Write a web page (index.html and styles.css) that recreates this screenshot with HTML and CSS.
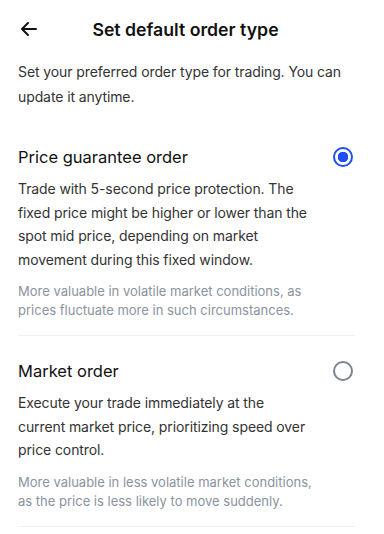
FILE: index.html
```html
<!DOCTYPE html>
<html>
<head>
<meta charset="utf-8">
<link rel="stylesheet" href="styles.css">
</head>
<body>
<div class="page">
  <header class="header">
    <svg class="back" width="20" height="20" viewBox="0 0 20 20"><path d="M17 10H3M9 4L3 10L9 16" fill="none" stroke="#111" stroke-width="2" stroke-linecap="round" stroke-linejoin="round"/></svg>
    <h1 class="title">Set default order type</h1>
  </header>
  <p class="intro">Set your preferred order type for trading. You can update it anytime.</p>
  <div class="option">
    <div class="option-head">
      <span class="option-title">Price guarantee order</span>
      <span class="radio checked"></span>
    </div>
    <p class="desc">Trade with 5-second price protection. The fixed price might be higher or lower than the spot mid price, depending on market movement during this fixed window.</p>
    <p class="note">More valuable in volatile market conditions, as prices fluctuate more in such circumstances.</p>
  </div>
  <div class="option">
    <div class="option-head">
      <span class="option-title">Market order</span>
      <span class="radio"></span>
    </div>
    <p class="desc">Execute your trade immediately at the current market price, prioritizing speed over price control.</p>
    <p class="note">More valuable in less volatile market conditions, as the price is less likely to move suddenly.</p>
  </div>
</div>
</body>
</html>
```
FILE: styles.css
```css
* { box-sizing: border-box; }
body { margin: 0; background: #fff; font-family: Inter, "Noto Sans", sans-serif; color: #111; }
.page { padding: 0 29px 0 18px; }
.header { display: flex; align-items: center; height: 58px; position: relative; }
.back { margin-left: 1px; }
.title { margin: 0; font-size: 17.7px; font-weight: 600; position: absolute; left: 0; right: 2px; text-align: center; pointer-events: none; color: #111; }
.intro { margin: 1px 0 0; font-size: 14px; letter-spacing: -0.1px; line-height: 25px; color: #333; }
.option { border-bottom: 1px solid #eef0f3; padding: 36px 0 15px; }
.option + .option { padding-top: 23px; }
.option-head { display: flex; justify-content: space-between; align-items: center; height: 24px; }
.option-title { font-size: 16.5px; color: #111; }
.radio { width: 20px; height: 20px; border-radius: 50%; border: 2px solid #7a8594; margin-right: 2px; }
.radio.checked { border-color: #1f4ef5; background: radial-gradient(circle, #1f4ef5 0 5px, #fff 5.5px); }
.desc { margin: 8px 0 0; font-size: 14px; letter-spacing: -0.1px; line-height: 23.5px; color: #333; padding-right: 45px; }
.note { margin: 11px 0 0; font-size: 13px; line-height: 19px; color: #8a93a0; padding-right: 30px; }
```
